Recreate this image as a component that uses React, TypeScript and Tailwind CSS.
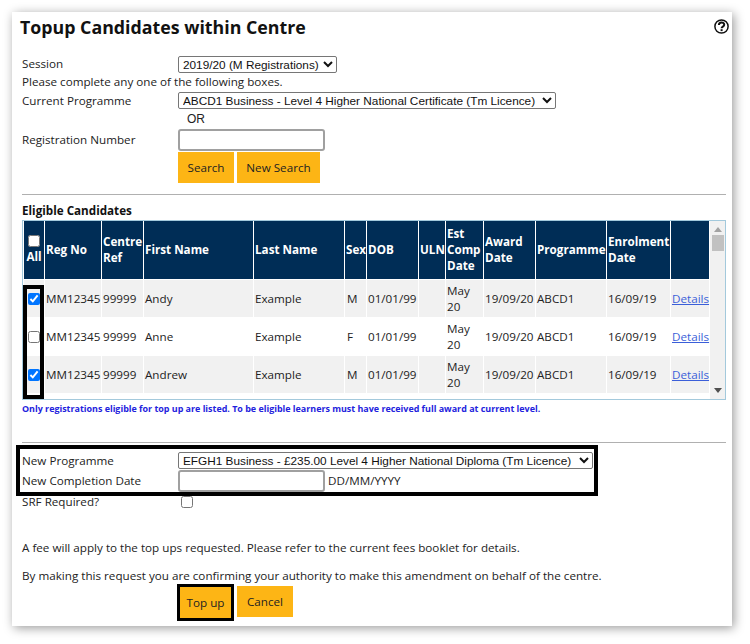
const body = { fontFamily: '"Open Sans", sans-serif' };
const native = { fontFamily: '"Liberation Sans", Arial, sans-serif' };

const selectCls = "h-[17px] rounded-[2px] border border-[#767676] bg-white p-0 text-[11.8px] leading-[15px] text-[#111]";
const inputCls = "h-[22px] w-[147px] rounded-[3px] border-2 border-[#a0a0a0] bg-white";
const btnCls = "h-[31px] bg-[#fdb515] text-[11.66px] text-[#222]";

const cols = [20, 56, 41, 109, 90, 21, 51, 26, 37, 51, 70, 63, 38];
const headers = ["Reg No", "Centre Ref", "First Name", "Last Name", "Sex", "DOB", "ULN", "Est Comp Date", "Award Date", "Programme", "Enrolment Date", ""];

const rows = [
  { first: "Andy", sex: "M", checked: true },
  { first: "Anne", sex: "F", checked: false },
  { first: "Andrew", sex: "M", checked: true },
];

function Row({ label, children, className }: { label: string; children: React.ReactNode; className?: string }) {
  return (
    <div className={`flex items-center ${className ?? ""}`}>
      <span className="w-[156px] shrink-0">{label}</span>
      {children}
    </div>
  );
}

function Candidates() {
  return (
    <div className="relative flex h-[180px] w-[704px] overflow-hidden border border-[#a3c9dc]">
      <table className="-mt-px h-fit w-[687px] shrink-0 table-fixed border-separate border-spacing-[1px] text-[11.66px] leading-[16px]">
        <colgroup>
          {cols.map((w, i) => (
            <col key={i} style={{ width: w }} />
          ))}
        </colgroup>
        <thead>
          <tr className="h-[58px] bg-[#002d56] text-left font-bold text-white">
            <th className="p-0 text-center font-bold">
              <input type="checkbox" className="m-0 mx-auto block h-[12px] w-[12px]" />
              <span className="mt-[2px] block">All</span>
            </th>
            {headers.map((h, i) => (
              <th key={i} className="px-[1px] py-0 font-bold">
                {h}
              </th>
            ))}
          </tr>
        </thead>
        <tbody className="text-[#222]">
          {rows.map((r, i) => (
            <tr key={r.first} className={i === 1 ? "h-[37px] bg-white" : "h-[37px] bg-[#f1f1f1]"}>
              <td className="p-0 text-center">
                <input type="checkbox" defaultChecked={r.checked} className="m-0 mx-auto block h-[12px] w-[12px]" />
              </td>
              <td className="px-[1px] whitespace-nowrap">MM12345</td>
              <td className="px-[1px]">99999</td>
              <td className="px-[1px]">{r.first}</td>
              <td className="px-[1px]">Example</td>
              <td className="px-[2px]">{r.sex}</td>
              <td className="px-[1px]">01/01/99</td>
              <td />
              <td className="px-[1px]">May 20</td>
              <td className="px-[1px]">19/09/20</td>
              <td className="px-[1px]">ABCD1</td>
              <td className="px-[1px]">16/09/19</td>
              <td className="px-[1px]">
                <a href="#" className="text-[#3b5fd9] underline">
                  Details
                </a>
              </td>
            </tr>
          ))}
        </tbody>
      </table>
      <div className="flex w-[15px] shrink-0 flex-col items-center bg-[#f1f1f1] pt-[6px] pb-[6px]">
        <svg width="8" height="5" viewBox="0 0 8 5">
          <path d="M4 0 8 5H0z" fill="#a3a3a3" />
        </svg>
        <div className="mt-[3px] h-[16px] w-[12px] bg-[#c1c1c1]" />
        <svg className="mt-auto" width="8" height="5" viewBox="0 0 8 5">
          <path d="M0 0h8L4 5z" fill="#505050" />
        </svg>
      </div>
      <div className="absolute top-[64px] left-0 h-[114px] w-[21px] border-4 border-black" />
    </div>
  );
}

export default function App() {
  return (
    <div className="h-[644px] w-[750px] overflow-hidden bg-white pt-3 pl-3" style={body}>
      <div className="h-[614px] w-[720px] bg-white pr-[6px] pl-[10px] text-[11.66px] leading-[18px] text-[#222] shadow-[2px_2px_10px_rgba(0,0,0,0.4)]">
        <div className="-mr-[3px] -ml-[2px] flex items-start justify-between pt-[3px]">
          <h1 className="text-[17.8px] leading-[24px] font-bold text-[#111]">Topup Candidates within Centre</h1>
          <svg className="mt-[4px]" width="15" height="15" viewBox="0 0 15 15" fill="none" stroke="#111">
            <circle cx="7.5" cy="7.5" r="6.6" strokeWidth="1.5" />
            <path d="M4.9 5.9c0-3.3 5.3-3.3 5.3-.2 0 1.9-2.6 1.9-2.6 3.6" strokeWidth="2" />
            <path d="M7.6 10.2v1.9" strokeWidth="2" />
          </svg>
        </div>

        <Row label="Session" className="mt-[16px] h-[18px]">
          <select className={`${selectCls} w-[159px]`} style={native} defaultValue="a">
            <option value="a">2019/20 (M Registrations)</option>
          </select>
        </Row>
        <p>Please complete any one of the following boxes.</p>
        <Row label="Current Programme" className="h-[19px]">
          <select className={`${selectCls} w-[378px]`} style={native} defaultValue="a">
            <option value="a">ABCD1 Business - Level 4 Higher National Certificate (Tm Licence)</option>
          </select>
        </Row>
        <p className="h-[18px] pl-[165px] text-[12px]" style={native}>
          OR
        </p>
        <Row label="Registration Number" className="mt-[1px] h-[22px]">
          <input className={inputCls} />
        </Row>
        <div className="mt-[1px] flex gap-[3px] pl-[156px]">
          <button className={`${btnCls} w-[56px]`}>Search</button>
          <button className={`${btnCls} w-[83px]`}>New Search</button>
        </div>
        <hr className="mt-[11px] border-t border-[#b0b0b0]" />

        <h2 className="mt-[7px] text-[11.66px] leading-[18px] font-bold text-[#111]">Eligible Candidates</h2>
        <Candidates />
        <p className="mt-[1px] text-[8.93px] leading-[16px] font-bold text-[#2222dd]">
          Only registrations eligible for top up are listed. To be eligible learners must have received full award at current level.
        </p>

        <hr className="mt-[25px] border-t border-[#b0b0b0]" />
        <div className="mt-[2px] -ml-[6px] w-[582px] border-4 border-black pl-[2px]">
          <Row label="New Programme" className="mt-[3px] h-[17px]">
            <select className={`${selectCls} w-[415px]`} style={native} defaultValue="a">
              <option value="a">EFGH1 Business - £235.00 Level 4 Higher National Diploma (Tm Licence)</option>
            </select>
          </Row>
          <Row label="New Completion Date" className="mt-[1px] h-[22px]">
            <input className={inputCls} />
            <span className="ml-[3px]">DD/MM/YYYY</span>
          </Row>
        </div>
        <Row label="SRF Required?" className="h-[12px]">
          <input type="checkbox" className="m-0 ml-[3px] h-[12px] w-[12px]" />
        </Row>

        <p className="mt-[31px]">A fee will apply to the top ups requested. Please refer to the current fees booklet for details.</p>
        <p className="mt-[10px]">By making this request you are confirming your authority to make this amendment on behalf of the centre.</p>
        <div className="-mt-px flex items-start pl-[155px]">
          <button className="h-[37px] w-[57px] border-[3px] border-black bg-[#fdb515] text-[11.66px] text-[#222]">Top up</button>
          <button className={`${btnCls} mt-[2px] ml-[3px] w-[56px]`}>Cancel</button>
        </div>
      </div>
    </div>
  );
}
